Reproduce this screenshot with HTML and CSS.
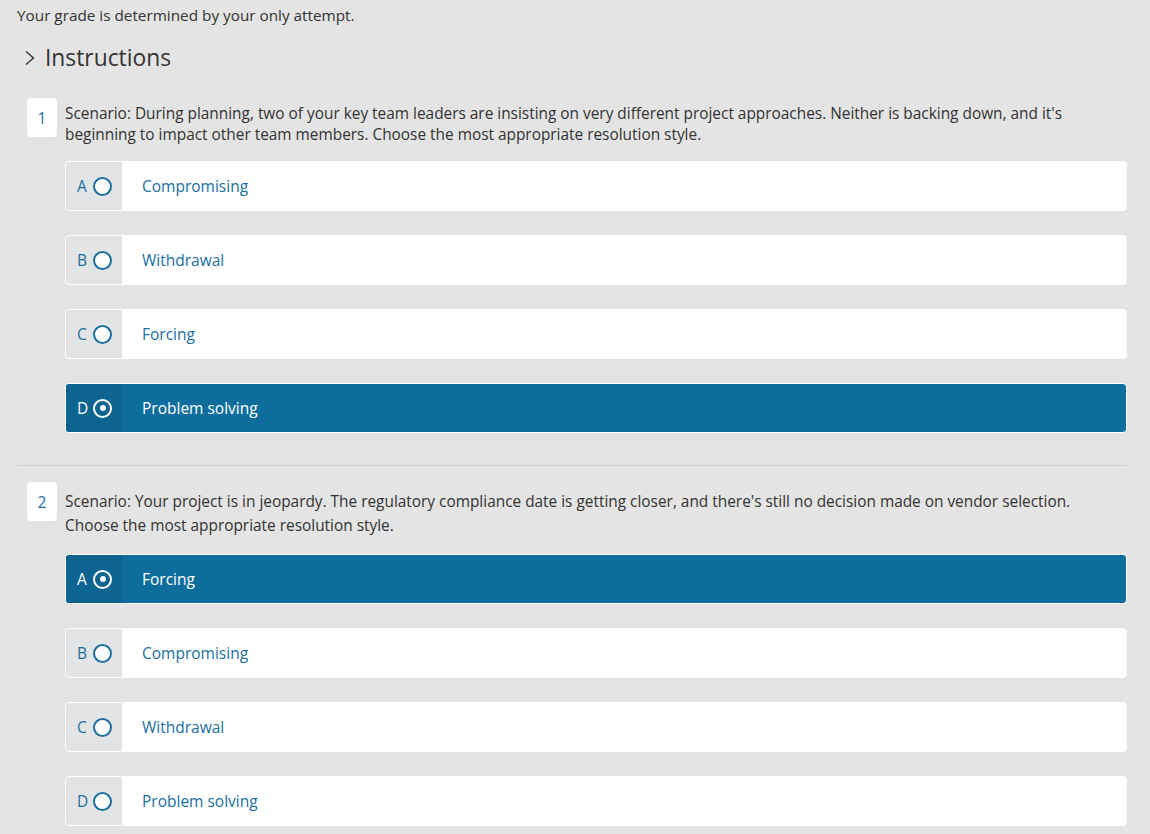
FILE: index.html
```html
<!DOCTYPE html>
<html>
<head>
<meta charset="utf-8">
<link rel="stylesheet" href="styles.css">
</head>
<body>
<div class="page">
  <div class="grade">Your grade is determined by your only attempt.</div>
  <div class="instructions">
    <svg class="chev" width="12" height="16" viewBox="0 0 12 16"><path d="M2 1.5 L9.5 8 L2 14.5" fill="none" stroke="#333" stroke-width="1.4"/></svg>
    <span>Instructions</span>
  </div>

  <div class="question q1">
    <div class="qnum">1</div>
    <div class="qbody">
      <div class="qtext">Scenario: During planning, two of your key team leaders are insisting on very different project approaches. Neither is backing down, and it's beginning to impact other team members. Choose the most appropriate resolution style.</div>
      <div class="options">
        <div class="option"><div class="opt-left"><span class="letter">A</span><span class="radio"></span></div><div class="opt-text">Compromising</div></div>
        <div class="option"><div class="opt-left"><span class="letter">B</span><span class="radio"></span></div><div class="opt-text">Withdrawal</div></div>
        <div class="option"><div class="opt-left"><span class="letter">C</span><span class="radio"></span></div><div class="opt-text">Forcing</div></div>
        <div class="option selected"><div class="opt-left"><span class="letter">D</span><span class="radio"></span></div><div class="opt-text">Problem solving</div></div>
      </div>
    </div>
  </div>

  <hr class="divider">

  <div class="question q2">
    <div class="qnum">2</div>
    <div class="qbody">
      <div class="qtext">Scenario: Your project is in jeopardy. The regulatory compliance date is getting closer, and there's still no decision made on vendor selection. Choose the most appropriate resolution style.</div>
      <div class="options">
        <div class="option selected"><div class="opt-left"><span class="letter">A</span><span class="radio"></span></div><div class="opt-text">Forcing</div></div>
        <div class="option"><div class="opt-left"><span class="letter">B</span><span class="radio"></span></div><div class="opt-text">Compromising</div></div>
        <div class="option"><div class="opt-left"><span class="letter">C</span><span class="radio"></span></div><div class="opt-text">Withdrawal</div></div>
        <div class="option"><div class="opt-left"><span class="letter">D</span><span class="radio"></span></div><div class="opt-text">Problem solving</div></div>
      </div>
    </div>
  </div>
</div>
</body>
</html>
```

FILE: styles.css
```css
html, body {
  margin: 0;
  padding: 0;
  background: #e4e4e4;
}
body {
  font-family: "Open Sans", "Noto Sans", sans-serif;
  color: #333;
  height: 834px;
  overflow: hidden;
}
.page {
  padding: 0 23px 0 17px;
}
.grade {
  font-size: 15.3px;
  line-height: 20px;
  padding-top: 5px;
}
.instructions {
  display: flex;
  align-items: center;
  margin-top: 21px;
  height: 24px;
  padding-left: 7px;
}
.chev {
  margin-right: 9px;
}
.instructions span {
  font-size: 22.8px;
  line-height: 24px;
  color: #333;
}
.question {
  display: flex;
  align-items: flex-start;
}
.q1 {
  margin-top: 28px;
}
.qnum {
  width: 30px;
  height: 39px;
  background: #fff;
  border-radius: 4px;
  color: #1a6fa0;
  font-size: 15.5px;
  display: flex;
  align-items: center;
  justify-content: center;
  margin-left: 10px;
  margin-right: 8px;
  flex-shrink: 0;
}
.qbody {
  flex: 1;
}
.qtext {
  font-size: 15.4px;
  line-height: 21px;
  padding-top: 5px;
  color: #333;
}
.q2 .qtext {
  line-height: 24px;
  padding-top: 8px;
}
.options {
  display: flex;
  flex-direction: column;
  gap: 24px;
  margin-top: 16px;
}
.q2 .options {
  margin-top: 16px;
}
.option {
  display: flex;
  height: 48px;
  background: #fff;
  border: 1px solid #fff;
  border-radius: 4px;
  overflow: hidden;
}
.opt-left {
  width: 56px;
  background: #e3e4e6;
  display: flex;
  align-items: center;
  padding-left: 11px;
  box-sizing: border-box;
  flex-shrink: 0;
}
.letter {
  font-size: 15.5px;
  color: #1a6fa0;
  width: 16px;
}
.radio {
  width: 15px;
  height: 15px;
  border: 2px solid #1a6fa0;
  border-radius: 50%;
  position: relative;
  background: #fff;
}
.opt-text {
  display: flex;
  align-items: center;
  padding-left: 20px;
  font-size: 15.5px;
  color: #1a6fa0;
}
.option.selected {
  background: #0d6e9e;
}
.option.selected .opt-left {
  background: #0c6590;
}
.option.selected .letter {
  color: #fff;
}
.option.selected .radio {
  border-color: #fff;
  background: transparent;
}
.option.selected .radio::after {
  content: "";
  position: absolute;
  left: 4.5px;
  top: 4.5px;
  width: 6px;
  height: 6px;
  border-radius: 50%;
  background: #fff;
}
.option.selected .opt-text {
  color: #fff;
}
.divider {
  border: none;
  border-top: 1px solid #cfcfcf;
  margin: 32px 0 16px 0;
}
```
